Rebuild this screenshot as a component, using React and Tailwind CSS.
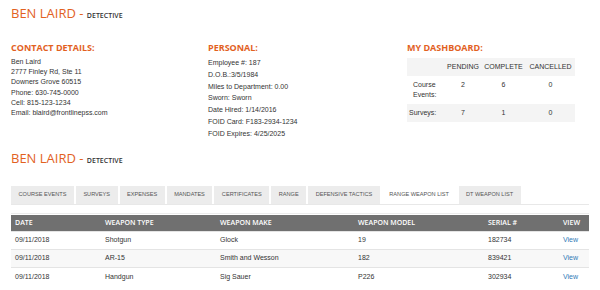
import React from "react";

const contact = [
  "Ben Laird",
  "2777 Finley Rd, Ste 11",
  "Downers Grove 60515",
  "Phone: 630-745-0000",
  "Cell: 815-123-1234",
  "Email: blaird@frontlinepss.com",
];

const personal = [
  "Employee #: 187",
  "D.O.B.:3/5/1984",
  "Miles to Department: 0.00",
  "Sworn: Sworn",
  "Date Hired: 1/14/2016",
  "FOID Card: F183-2934-1234",
  "FOID Expires: 4/25/2025",
];

const tabs = [
  "Course Events",
  "Surveys",
  "Expenses",
  "Mandates",
  "Certificates",
  "Range",
  "Defensive Tactics",
  "Range Weapon List",
  "DT Weapon List",
];

const weapons = [
  { date: "09/11/2018", type: "Shotgun", make: "Glock", model: "19", serial: "182734" },
  { date: "09/11/2018", type: "AR-15", make: "Smith and Wesson", model: "182", serial: "839421" },
  { date: "09/11/2018", type: "Handgun", make: "Sig Sauer", model: "P226", serial: "302934" },
];

const heading = "font-['Open_Sans',sans-serif]";
const body = "font-['Liberation_Sans',Arial,sans-serif]";

function NameTitle() {
  return (
    <h1 className={`${heading} text-[13px] leading-[16px] text-[#e2611f]`}>
      BEN LAIRD -{" "}
      <span className="text-[7px] font-semibold uppercase text-[#333]">Detective</span>
    </h1>
  );
}

function SectionTitle({ children }) {
  return (
    <h2 className={`${heading} text-[9px] font-bold leading-[12px] text-[#e2611f]`}>{children}</h2>
  );
}

export default function App() {
  return (
    <div className={`${body} w-[600px] h-[290px] bg-white text-[#333] px-[11px] pt-[5px] overflow-hidden`}>
      <NameTitle />

      <div className="grid grid-cols-[197px_199px_1fr] mt-[18px]">
        <div>
          <SectionTitle>CONTACT DETAILS:</SectionTitle>
          <div className="mt-[3px] text-[7px] leading-[10.2px]">
            {contact.map((l) => (
              <div key={l}>{l}</div>
            ))}
          </div>
        </div>
        <div>
          <SectionTitle>PERSONAL:</SectionTitle>
          <div className="mt-[3px] text-[7px] leading-[11.8px]">
            {personal.map((l) => (
              <div key={l}>{l}</div>
            ))}
          </div>
        </div>
        <div>
          <SectionTitle>MY DASHBOARD:</SectionTitle>
          <table className="mt-[4px] w-[168px] table-fixed text-[7px] leading-[10px]">
            <colgroup>
              <col className="w-[38px]" />
              <col className="w-[36px]" />
              <col className="w-[45px]" />
              <col className="w-[49px]" />
            </colgroup>
            <tbody>
              <tr className="bg-[#f4f4f4]">
                <td className="py-[4px]"></td>
                <td className="py-[4px] text-center">PENDING</td>
                <td className="py-[4px] text-center">COMPLETE</td>
                <td className="py-[4px] text-center">CANCELLED</td>
              </tr>
              <tr>
                <td className="py-[4px] pl-[6px] align-top">
                  Course
                  <br />
                  Events:
                </td>
                <td className="py-[4px] text-center align-top">2</td>
                <td className="py-[4px] text-center align-top">6</td>
                <td className="py-[4px] text-center align-top">0</td>
              </tr>
              <tr className="bg-[#f4f4f4]">
                <td className="py-[4px] pl-[2px]">Surveys:</td>
                <td className="py-[4px] text-center">7</td>
                <td className="py-[4px] text-center">1</td>
                <td className="py-[4px] text-center">0</td>
              </tr>
            </tbody>
          </table>
        </div>
      </div>

      <div className="mt-[10px]">
        <NameTitle />
      </div>

      <div className="mt-[17px] flex gap-[2px] border-b border-[#e8e8e8]">
        {tabs.map((t) => {
          const active = t === "Range Weapon List";
          return (
            <div
              key={t}
              className={`h-[18px] px-[7.5px] flex items-center text-[5.6px] uppercase text-[#555] ${
                active ? "bg-white" : "bg-[#ececec]"
              }`}
            >
              {t}
            </div>
          );
        })}
      </div>

      <div className="mt-[8px] border-t border-[#ececec] pt-[1px]">
        <table className="w-full table-fixed text-[7px]">
          <colgroup>
            <col className="w-[90px]" />
            <col className="w-[115px]" />
            <col className="w-[138px]" />
            <col className="w-[130px]" />
            <col className="w-[75px]" />
            <col className="w-[30px]" />
          </colgroup>
          <thead>
            <tr className={`${heading} bg-[#707070] text-white text-[7px] h-[17px]`}>
              <th className="text-left pl-[4px] font-semibold">DATE</th>
              <th className="text-left pl-[4px] font-semibold">WEAPON TYPE</th>
              <th className="text-left pl-[4px] font-semibold">WEAPON MAKE</th>
              <th className="text-left pl-[4px] font-semibold">WEAPON MODEL</th>
              <th className="text-left pl-[4px] font-semibold">SERIAL #</th>
              <th className="text-left pl-[4px] font-semibold">VIEW</th>
            </tr>
          </thead>
          <tbody>
            {weapons.map((w, i) => (
              <tr
                key={w.serial}
                className={`h-[18px] border-t border-[#e4e4e4] ${i === 1 ? "bg-[#f8f8f8]" : "bg-white"}`}
              >
                <td className="pl-[4px]">{w.date}</td>
                <td className="pl-[4px]">{w.type}</td>
                <td className="pl-[4px]">{w.make}</td>
                <td className="pl-[4px]">{w.model}</td>
                <td className="pl-[4px]">{w.serial}</td>
                <td className="pl-[4px] text-[#337ab7]">View</td>
              </tr>
            ))}
          </tbody>
        </table>
      </div>
    </div>
  );
}
